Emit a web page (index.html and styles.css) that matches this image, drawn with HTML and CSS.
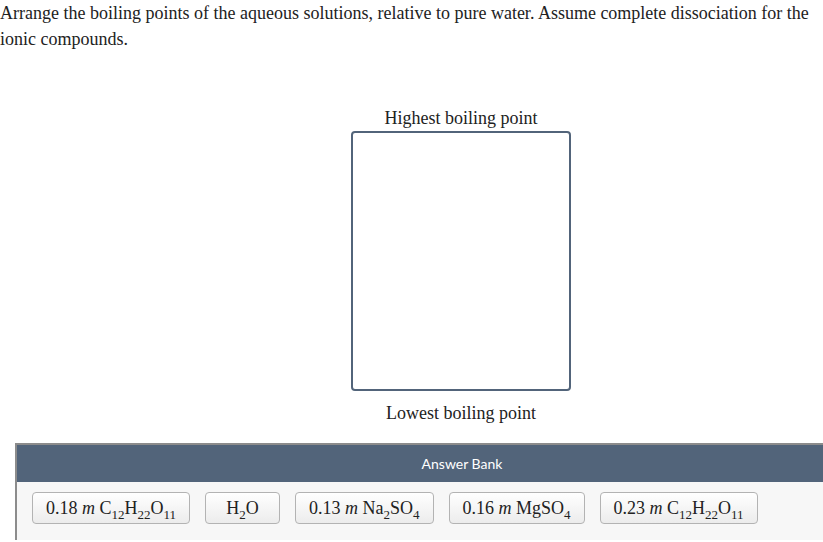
FILE: index.html
```html
<!DOCTYPE html>
<html lang="en">
<head>
    <meta charset="UTF-8">
    <meta name="viewport" content="width=device-width, initial-scale=1.0">
    <title>Boiling points</title>
    <link rel="stylesheet" href="styles.css">
</head>
<body>
    <p class="question">Arrange the boiling points of the aqueous solutions, relative to pure water. Assume complete dissociation for the ionic compounds.</p>

    <div class="ranking">
        <div class="ranking-label">Highest boiling point</div>
        <div class="drop-zone"></div>
        <div class="ranking-label">Lowest boiling point</div>
    </div>

    <div class="bank">
        <div class="bank-header">Answer Bank</div>
        <div class="bank-items">
            <div class="chip">0.18 <i>m</i> C<sub>12</sub>H<sub>22</sub>O<sub>11</sub></div>
            <div class="chip">H<sub>2</sub>O</div>
            <div class="chip">0.13 <i>m</i> Na<sub>2</sub>SO<sub>4</sub></div>
            <div class="chip">0.16 <i>m</i> MgSO<sub>4</sub></div>
            <div class="chip">0.23 <i>m</i> C<sub>12</sub>H<sub>22</sub>O<sub>11</sub></div>
        </div>
    </div>
</body>
</html>
```

FILE: styles.css
```css
body {
    margin: 0;
    font-family: "Liberation Serif", "Times New Roman", serif;
    color: #222;
    background-color: #fff;
    overflow: hidden;
}
.question {
    margin: 0;
    width: 823px;
    font-size: 18px;
    line-height: 26px;
}
.ranking {
    display: flex;
    flex-direction: column;
    align-items: center;
    width: 220px;
    margin: 56px 0 0 351px;
}
.ranking-label {
    font-size: 18px;
    line-height: 20px;
}
.drop-zone {
    box-sizing: border-box;
    width: 220px;
    height: 260px;
    margin: 3px 0 12px;
    border: 2px solid #52647a;
    border-radius: 4px;
}
.bank {
    box-sizing: border-box;
    width: 808px;
    height: 97px;
    margin: 20px 0 0 15px;
    border-top: 2px solid #8c8c8c;
    border-left: 2px solid #8c8c8c;
    background-color: #f7f7f7;
}
.bank-header {
    height: 37px;
    line-height: 37px;
    padding-left: 84px;
    text-align: center;
    background-color: #52647a;
    color: #fff;
    font-family: Lato, "Liberation Sans", sans-serif;
    font-size: 14px;
}
.bank-items {
    display: flex;
    gap: 15px;
    padding: 10px 15px;
}
.chip {
    box-sizing: border-box;
    min-width: 75px;
    height: 32px;
    line-height: 30px;
    padding: 0 13px;
    border: 1px solid #b3b3b3;
    border-radius: 4px;
    background: linear-gradient(#fff, #ececec);
    font-size: 18px;
    text-align: center;
    white-space: nowrap;
}
.chip sub {
    font-size: 13px;
    vertical-align: -5px;
    line-height: 0;
}
```
